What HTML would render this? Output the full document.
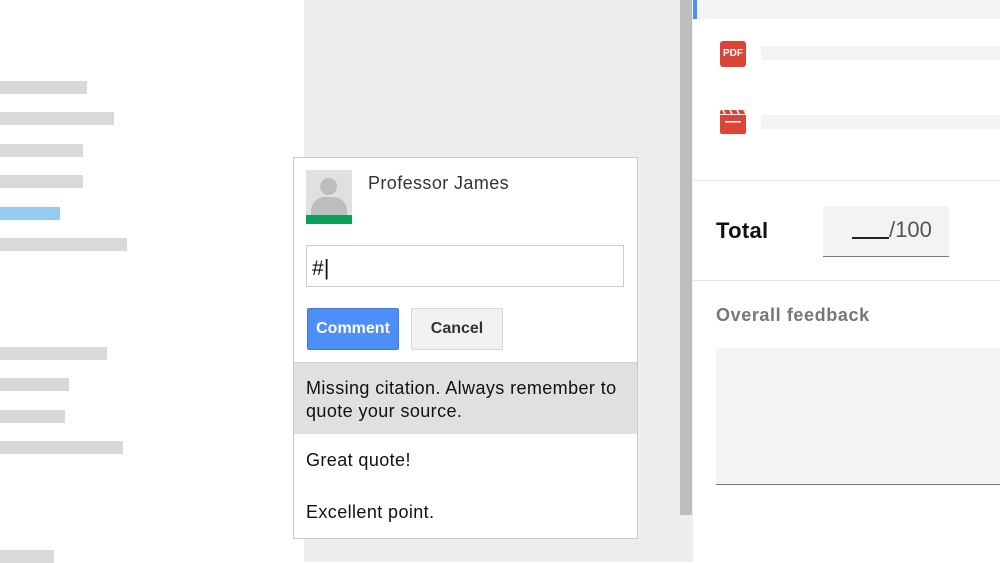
<!DOCTYPE html>
<html><head><style>
*{margin:0;padding:0;box-sizing:border-box}
body{width:1000px;height:562px;overflow:hidden;position:relative;background:#fff;font-family:"Liberation Sans",sans-serif}
.a{position:absolute}
.bar{position:absolute;left:0;height:13px;background:#d9d9d9}
.c{letter-spacing:0.4px}
</style></head><body>
<div class="bar" style="top:81px;width:87px"></div>
<div class="bar" style="top:112px;width:114px"></div>
<div class="bar" style="top:144px;width:83px"></div>
<div class="bar" style="top:175px;width:83px"></div>
<div class="bar" style="top:207px;width:60px;background:#94cdf0"></div>
<div class="bar" style="top:238px;width:127px"></div>
<div class="bar" style="top:347px;width:107px"></div>
<div class="bar" style="top:378px;width:69px"></div>
<div class="bar" style="top:410px;width:65px"></div>
<div class="bar" style="top:441px;width:123px"></div>
<div class="bar" style="top:550px;width:54px"></div>

<div class="a" style="left:304px;top:0;width:389px;height:562px;background:#eeeeee"></div>
<div class="a" style="left:680px;top:0;width:12px;height:515px;background:#bdbdbd"></div>

<div class="a" style="left:693px;top:0;width:307px;height:562px;background:#fff"></div>
<div class="a" style="left:693px;top:0;width:307px;height:19px;background:#f3f3f3"></div>
<div class="a" style="left:693px;top:0;width:4px;height:19px;background:#4d8ef7"></div>
<div class="a" style="left:720px;top:41px;width:26px;height:26px;background:#db4437;border-radius:3px;color:#fff;font-size:10px;font-weight:bold;text-align:center;line-height:26px">PDF</div>
<div class="a" style="left:761px;top:46px;width:239px;height:14px;background:#f3f3f3"></div>
<svg class="a" style="left:720px;top:110px" width="26" height="25" viewBox="0 0 26 25"><rect x="0" y="0" width="26" height="24" rx="2" fill="#db4437"/><path d="M3 0l2 4M10 0l2 4M17 0l2 4M24 0l2 4" stroke="#fff" stroke-width="1.5"/><rect x="0" y="4" width="26" height="1" fill="#fff"/><rect x="5" y="11" width="16" height="1.5" fill="#fff"/></svg>
<div class="a" style="left:761px;top:115px;width:239px;height:14px;background:#f3f3f3"></div>
<div class="a" style="left:693px;top:180px;width:307px;height:1px;background:#e3e3e3"></div>
<div class="a" style="left:716px;top:218px;font-size:22px;font-weight:bold;color:#111;letter-spacing:0.3px">Total</div>
<div class="a" style="left:823px;top:206px;width:126px;height:51px;background:#f3f3f3;border-radius:4px 4px 0 0;border-bottom:1px solid #777"></div>
<div class="a" style="left:852px;top:217px;font-size:22px;color:#555"><span style="display:inline-block;width:37px;border-bottom:2px solid #222;height:22px;vertical-align:top"></span>/100</div>
<div class="a" style="left:693px;top:280px;width:307px;height:1px;background:#e3e3e3"></div>
<div class="a" style="left:716px;top:305px;font-size:18px;font-weight:bold;color:#777;letter-spacing:0.6px">Overall feedback</div>
<div class="a" style="left:716px;top:348px;width:284px;height:137px;background:#f3f3f3;border-radius:4px 0 0 0;border-bottom:1px solid #777"></div>

<div class="a" style="left:293px;top:157px;width:345px;height:382px;background:#fff;border:1px solid #c9c9c9"></div>
<div class="a" style="left:306px;top:170px;width:46px;height:54px;background:#e0e0e0;overflow:hidden">
<div class="a" style="left:14px;top:8px;width:17px;height:17px;border-radius:50%;background:#bdbdbd"></div>
<div class="a" style="left:5px;top:27px;width:36px;height:24px;border-radius:14px 14px 0 0;background:#bdbdbd"></div>
<div class="a" style="left:0;top:45px;width:46px;height:9px;background:#0f9d58"></div></div>
<div class="a c" style="left:368px;top:173px;font-size:18px;color:#333">Professor James</div>
<div class="a" style="left:306px;top:245px;width:318px;height:42px;border:1px solid #ccc"></div>
<div class="a" style="left:312px;top:255px;font-size:21px;color:#111">#<span style="font-weight:normal;font-size:22px">|</span></div>
<div class="a" style="left:307px;top:308px;width:92px;height:42px;background:#4d8ef7;border:1px solid #3b7be0;border-radius:2px;color:#fff;font-weight:bold;font-size:16px;text-align:center;line-height:40px">Comment</div>
<div class="a" style="left:411px;top:308px;width:92px;height:42px;background:#f2f2f2;border:1px solid #d6d6d6;border-radius:2px;color:#333;font-weight:bold;font-size:16px;text-align:center;line-height:40px">Cancel</div>
<div class="a" style="left:294px;top:362px;width:343px;height:72px;background:#e0e0e0;border-top:1px solid #ccc"></div>
<div class="a c" style="left:306px;top:377px;font-size:18px;line-height:23px;color:#111">Missing citation. Always remember to<br>quote your source.</div>
<div class="a c" style="left:306px;top:450px;font-size:18px;color:#111">Great quote!</div>
<div class="a c" style="left:306px;top:502px;font-size:18px;color:#111">Excellent point.</div>
</body></html>
